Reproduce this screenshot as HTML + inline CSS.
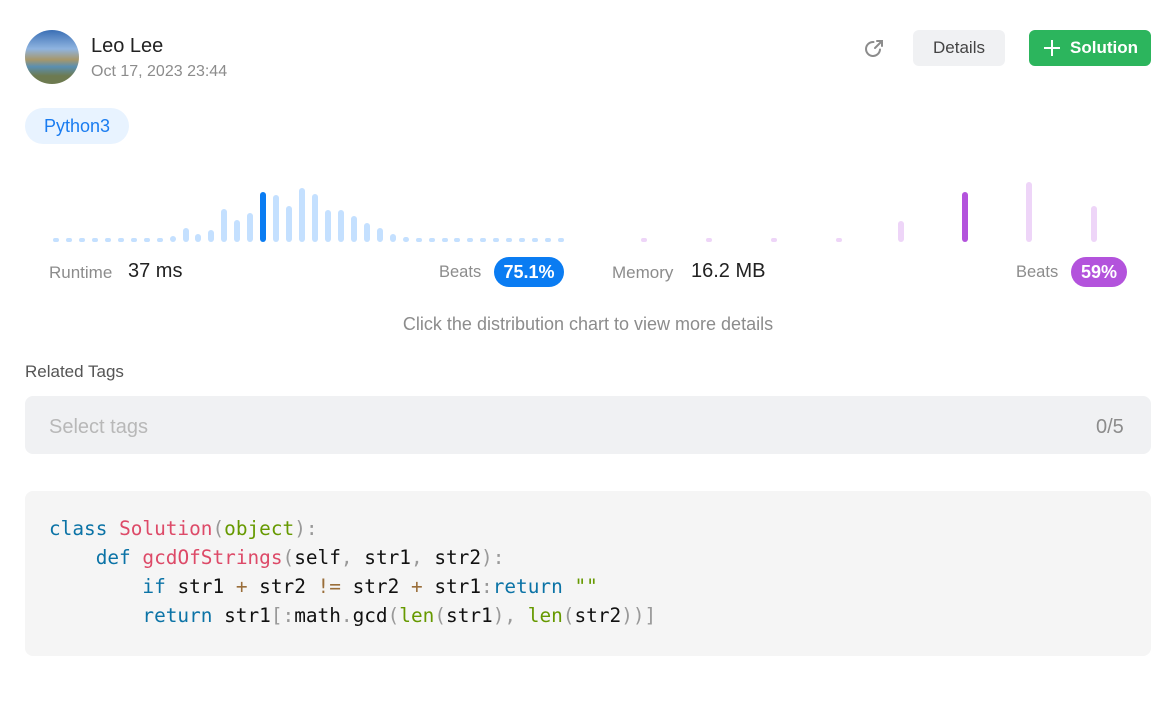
<!DOCTYPE html>
<html><head><meta charset="utf-8"><style>
body{margin:0;width:1164px;height:712px;background:#fff;font-family:"Liberation Sans",sans-serif;position:relative;overflow:hidden}
.a{position:absolute}
.b{position:absolute;width:6px;border-radius:3px;bottom:470px}
.code{font-family:"DejaVu Sans Mono",monospace;font-size:19.4px;line-height:29px;white-space:pre;color:#111}
.k{color:#0b73a6}.f{color:#dd4a68}.g{color:#669900}.p{color:#999}.o{color:#9a6e3a}
</style></head><body>
<div class="a" style="left:25px;top:30px;width:54px;height:54px;border-radius:50%;background:linear-gradient(#3a6fb5 0%,#8fb4e0 35%,#a7976a 55%,#5a8fb0 68%,#6d7a50 85%)"></div>
<div class="a" style="left:91px;top:35px;font-size:20px;color:#222">Leo Lee</div>
<div class="a" style="left:91px;top:63px;font-size:16px;color:#8c8c8c">Oct 17, 2023 23:44</div>
<svg class="a" style="left:862px;top:37px" width="24" height="24" viewBox="0 0 24 24" fill="none" stroke="#8c8c8c" stroke-width="2" stroke-linecap="round"><path d="M18 12.5A7 7 0 1 1 11.5 5"/><path d="M13 11l7-7M15 4h5v5"/></svg>
<div class="a" style="left:913px;top:30px;width:92px;height:36px;border-radius:6px;background:#f0f1f3;color:#444;font-size:17px;text-align:center;line-height:36px">Details</div>
<div class="a" style="left:1029px;top:30px;width:122px;height:36px;border-radius:6px;background:#2cb55d;color:#fff;font-size:17px;font-weight:bold;line-height:36px"><svg style="position:absolute;left:14px;top:9px" width="18" height="18" viewBox="0 0 18 18" stroke="#fff" stroke-width="2"><path d="M9 1v16M1 9h16"/></svg><span style="position:absolute;left:41px">Solution</span></div>
<div class="a" style="left:25px;top:108px;width:104px;height:36px;border-radius:18px;background:#e8f3ff;color:#1a7cf0;font-size:18px;text-align:center;line-height:36px">Python3</div>
<div id="rt"></div>
<div class="a" style="left:49px;top:263px;font-size:17px;color:#8c8c8c">Runtime</div>
<div class="a" style="left:128px;top:260px;font-size:20px;color:#222">37 ms</div>
<div class="a" style="left:439px;top:263px;font-size:16.5px;color:#8c8c8c">Beats</div>
<div class="a" style="left:494px;top:257px;width:70px;height:30px;border-radius:15px;background:#0a7cf2;color:#fff;font-size:18px;font-weight:bold;text-align:center;line-height:30px">75.1%</div>
<div class="a" style="left:612px;top:263px;font-size:17px;color:#8c8c8c">Memory</div>
<div class="a" style="left:691px;top:260px;font-size:20px;color:#222">16.2 MB</div>
<div class="a" style="left:1016px;top:263px;font-size:16.5px;color:#8c8c8c">Beats</div>
<div class="a" style="left:1071px;top:257px;width:56px;height:30px;border-radius:15px;background:#b353dc;color:#fff;font-size:18px;font-weight:bold;text-align:center;line-height:30px">59%</div>
<div class="a" style="left:0;width:1176px;top:314px;text-align:center;font-size:18px;color:#8c8c8c">Click the distribution chart to view more details</div>
<div class="a" style="left:25px;top:362px;font-size:17px;color:#555">Related Tags</div>
<div class="a" style="left:25px;top:396px;width:1126px;height:58px;border-radius:8px;background:#f0f1f3"></div>
<div class="a" style="left:49px;top:416px;font-size:20px;color:#b8b8b8">Select tags</div>
<div class="a" style="left:1096px;top:416px;font-size:20px;color:#8c8c8c">0/5</div>
<div class="a" style="left:25px;top:491px;width:1126px;height:165px;border-radius:8px;background:#f5f5f5"></div>
<div class="a code" style="left:49px;top:514px"><span class="k">class</span> <span class="f">Solution</span><span class="p">(</span><span class="g">object</span><span class="p">):</span>
    <span class="k">def</span> <span class="f">gcdOfStrings</span><span class="p">(</span>self<span class="p">,</span> str1<span class="p">,</span> str2<span class="p">):</span>
        <span class="k">if</span> str1 <span class="o">+</span> str2 <span class="o">!=</span> str2 <span class="o">+</span> str1<span class="p">:</span><span class="k">return</span> <span class="g">""</span>
        <span class="k">return</span> str1<span class="p">[:</span>math<span class="p">.</span>gcd<span class="p">(</span><span class="g">len</span><span class="p">(</span>str1<span class="p">),</span> <span class="g">len</span><span class="p">(</span>str2<span class="p">))]</span></div>
<script>
var h=[4,4,4,4,4,4,4,4,4,6,14,8,12,33,22,29,50,47,36,54,48,32,32,26,19,14,8,5,4,4,4,4,4,4,4,4,4,4,4,4];
var s='';
for(var i=0;i<40;i++){s+='<div class="b" style="left:'+(53+i*12.95)+'px;height:'+h[i]+'px;background:'+(i==16?'#0a7cf2':'#c4e0ff')+'"></div>';}
var mx=[641,706,771,836,898,962,1026,1091],mh=[4,4,4,4,21,50,60,36];
for(var j=0;j<8;j++){s+='<div class="b" style="left:'+mx[j]+'px;height:'+mh[j]+'px;background:'+(j==5?'#b353dc':'#eed5f8')+'"></div>';}
document.getElementById('rt').innerHTML=s;
</script>
</body></html>
